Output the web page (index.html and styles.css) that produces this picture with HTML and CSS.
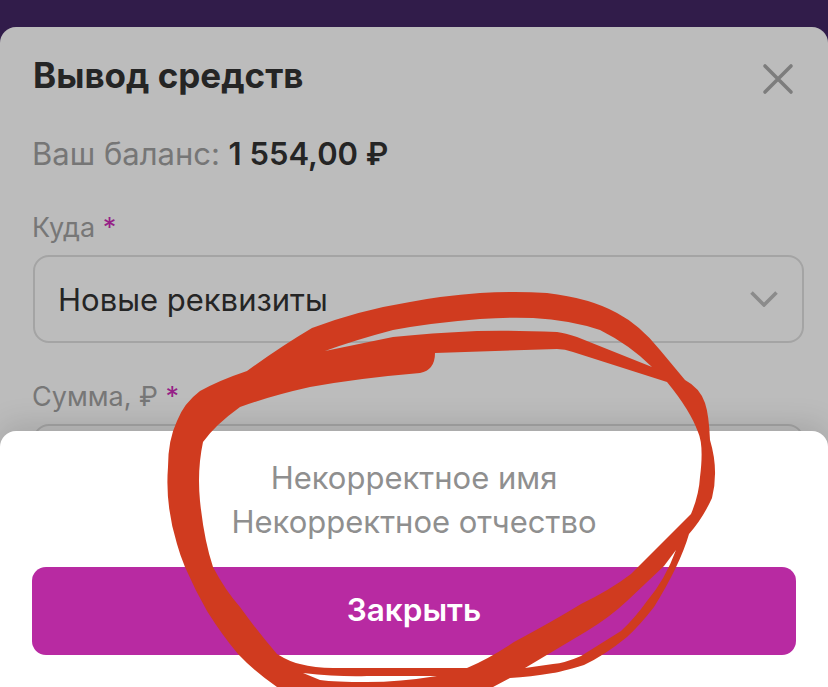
FILE: index.html
```html
<!DOCTYPE html>
<html lang="ru">
<head>
<meta charset="utf-8">
<title>Вывод средств</title>
<link rel="stylesheet" href="styles.css">
</head>
<body>
<main class="screen">
  <section class="sheet">
    <header class="sheet-head">
      <h1 class="title">Вывод средств</h1>
      <button class="close" aria-label="Закрыть">
        <svg width="32" height="32" viewBox="0 0 32 32"><path d="M3 3 L29 29 M29 3 L3 29" fill="none" stroke="#7d7d7d" stroke-width="3.6" stroke-linecap="round"/></svg>
      </button>
    </header>
    <p class="balance">Ваш баланс: <b>1 554,00 ₽</b></p>
    <div class="field">
      <div class="label">Куда <span class="req">*</span></div>
      <div class="input">
        <span>Новые реквизиты</span>
        <svg width="28" height="16" viewBox="0 0 28 16"><path d="M1.5 1.5 L14 14 L26.500 1.500" fill="none" stroke="#8b8b8b" stroke-width="3.6"/></svg>
      </div>
    </div>
    <div class="field">
      <div class="label">Сумма, ₽ <span class="req">*</span></div>
      <div class="input"></div>
    </div>
  </section>
  <section class="dialog">
    <p class="message">Некорректное имя<br>Некорректное отчество</p>
    <button class="primary">Закрыть</button>
  </section>
  <svg class="scribble" width="828" height="687" viewBox="0 0 828 687" aria-hidden="true">
    <path fill="#d03b1f" fill-rule="evenodd" d="M247 371 Q280 347 312 328 Q360 310 410 302 Q440 296 480 293 Q515 291 547 293 Q590 298 617 313 Q640 325 660 350 L685 380 Q700 388 705 403 Q709 415 710 440 Q719 470 712 498 Q703 518 689 534 Q680 565 654 607 Q640 625 627 637 Q605 655 584 665 Q560 672 553 673 Q530 677 510 678 L493 687 L480 700 L290 700 L277 687 Q255 672 238 654 Q222 635 207 611 Q195 590 185 567 Q180 555 177 544 Q165 505 168 467 Q168 440 177 421 Q184 403 200 391 Q220 380 247 371 Z
    M420 373 Q360 378 310 387 Q270 396 240 407 Q215 425 203 442 Q197 470 200 501 Q204 540 213 567 Q225 590 240 607 Q258 632 277 654 Q290 662 300 664 Q315 668 333 668 L467 668 Q490 658 514 642 Q555 620 581 604 Q610 590 631 574 L691 514 Q699 495 700 477 Q704 445 698 432 Q690 410 667 382 L573 352 Q565 349 557 349 L435 353 Q435 370 420 373 Z
    M325 351 Q355 340 393 330 Q430 323 480 319 Q510 317 533 318 Q570 320 600 330 Q630 345 652 367 L577 337 Q565 333 557 332 Q510 330 477 331 Q430 333 393 337 Z
    M525 668 L587 631 Q610 617 627 601 L664 566 L676 550 Q665 580 647 601 Q635 618 621 631 L581 656 Q565 663 553 664 Z
    M303 673 Q340 677 367 676 L437 676 Q400 682 367 682 Q335 682 320 680 Z"/>
  </svg>
</main>
</body>
</html>
```
FILE: styles.css
```css
* { box-sizing: border-box; }
html, body { margin: 0; height: 100%; }
body { background: #311c4a; font-family: Inter, "Noto Sans", sans-serif; overflow: hidden; }
.screen { position: relative; width: 828px; height: 687px; overflow: hidden; padding-top: 27px; }
.sheet { height: 660px; background: #bcbcbc; border-radius: 16px 16px 0 0; padding: 25px 24px 0 33px; }
.sheet-head { display: flex; justify-content: space-between; align-items: flex-start; padding-right: 10px; }
.title { margin: 0; font-size: 35px; line-height: 46px; font-weight: 700; color: #252525; }
.close { border: 0; background: none; padding: 0; margin-top: 11px; width: 32px; height: 32px; }
.close svg { display: block; }
.balance { margin: 34px 0 0 -1px; font-size: 31px; line-height: 44px; color: #767676; }
.balance b { color: #252525; font-weight: 600; }
.field { margin-top: 34px; }
.field + .field { margin-top: 36px; }
.label { margin-left: -1px; font-size: 27px; line-height: 36px; color: #777; }
.input { margin-top: 9px; height: 88px; border: 2px solid #a4a4a4; border-radius: 16px; display: flex; align-items: center; justify-content: space-between; padding: 0 24px 0 23px; font-size: 31px; color: #252525; }
.req { color: #961f87; }
.dialog { position: absolute; left: 0; right: 0; bottom: 0; height: 256px; background: #fff; border-radius: 16px 16px 0 0; box-shadow: 0 -6px 30px rgba(0,0,0,.13); padding: 25px 32px 0; text-align: center; }
.message { margin: 0; font-size: 31px; line-height: 44px; color: #8f8f8f; }
.primary { display: block; width: 100%; height: 88px; margin-top: 23px; padding: 0 0 3px; border: 0; border-radius: 14px; background: #b82aa2; color: #fff; font: 600 31.5px Inter, "Noto Sans", sans-serif; }
.scribble { position: absolute; left: 0; top: 0; pointer-events: none; }
```
